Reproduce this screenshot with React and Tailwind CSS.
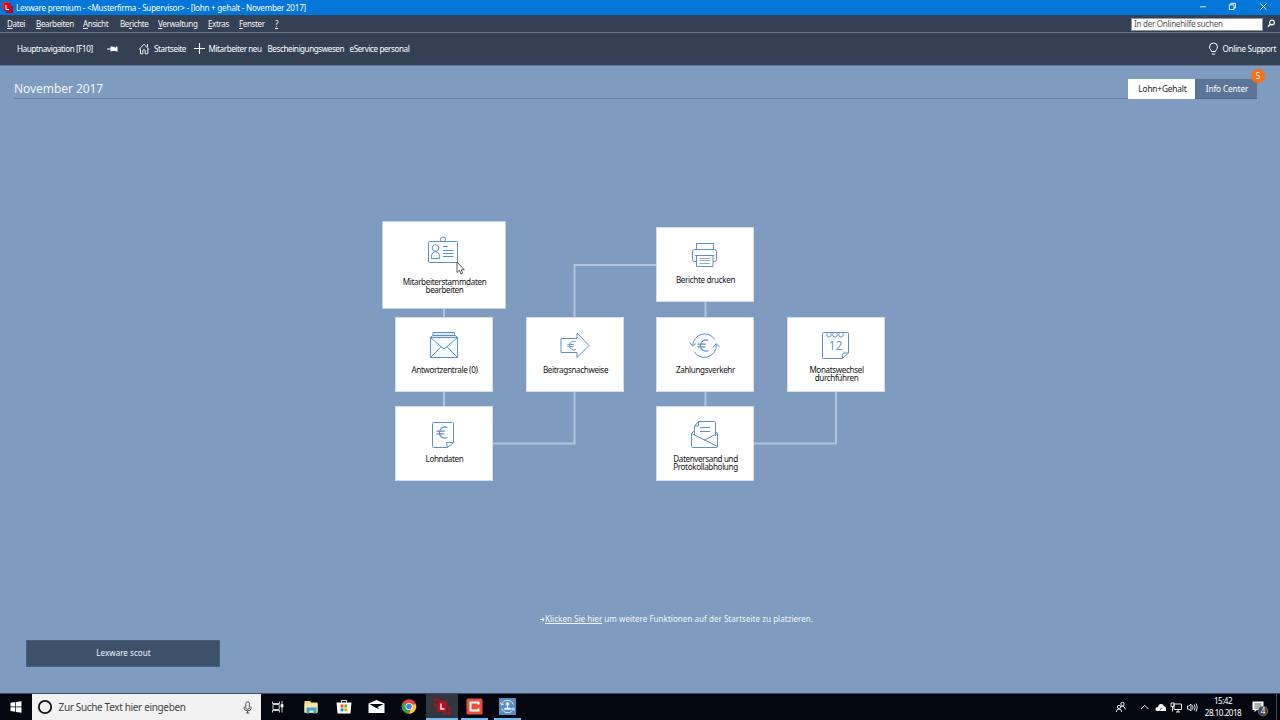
import React from "react";

const stroke = { fill: "none", stroke: "#5f8fc4", strokeWidth: 1, strokeLinejoin: "round" };

function Euro({ x, y, s = 1 }) {
  return (
    <g transform={`translate(${x} ${y}) scale(${s})`}>
      <path d="M4 -4.2A4.6 4.6 0 0 0 -2.6 0A4.6 4.6 0 0 0 4 4.2M-5 -1.2H2M-5 1.2H1.5" />
    </g>
  );
}

function Glyph({ children }) {
  return (
    <svg width="34" height="30" viewBox="0 0 34 30" className="shrink-0" {...stroke}>
      {children}
    </svg>
  );
}

const icons = {
  card: (
    <Glyph>
      <circle cx="16" cy="3.500" r="2.5" />
      <rect x="1.5" y="5.5" width="29" height="21" rx="1" fill="#fafdff" />
      <circle cx="8.500" cy="12" r="3.300" />
      <path d="M4.500 22.500V20.500C4.500 14.200 12.500 14.200 12.500 20.500V22.500ZM16 10.500H21M16 14.500H26.500M16 17.500H26.500M16 20.500H26.500" />
    </Glyph>
  ),
  mail: (
    <Glyph>
      <path d="M3.500 7.500L5.500 5.500H28.500L30.500 7.500M6 5V2.500H27.500V5" fill="#dcecf9" />
      <rect x="3.500" y="7.500" width="27" height="20" fill="#f4fafe" />
      <path d="M3.500 7.500L15 17.500Q17 19.500 19 17.500L30.500 7.500M3.500 27.500L14 16.700M30.500 27.500L20 16.700" />
    </Glyph>
  ),
  arrow: (
    <Glyph>
      <path d="M3 8.500H19V3L31 15.500L19 27.500V22.500H3Z" />
      <Euro x={14} y={15.500} s={0.95} />
    </Glyph>
  ),
  sheet: (
    <Glyph>
      <path d="M6.500 3.500H25.500Q26.500 3.500 26.500 4.500V23.500L20.500 28.500H6.500Q5.500 28.500 5.500 27.500V4.500Q5.500 3.500 6.500 3.500ZM26.500 23.500H19.500L20.500 28.500" />
      <Euro x={15.500} y={13.500} s={1.2} />
    </Glyph>
  ),
  printer: (
    <Glyph>
      <path d="M8.500 9.500V3.500H25.500V9.500M8.500 21.500H6.500Q4.500 21.500 4.500 19.500V11.500Q4.500 9.500 6.500 9.500H26.500Q28.500 9.500 28.500 11.500V19.500Q28.500 21.500 26.500 21.500H25M7 15.500H26.500M8.500 15.500V26.500H25V15.500" />
      <path d="M11.500 18.500H22M11.500 20.500H22M11.500 23.500H22" stroke="#8ba7cc" />
    </Glyph>
  ),
  cycle: (
    <Glyph>
      <path d="M26.800 9.500A12 12 0 0 0 4.700 15.500M1.800 12.500L4.700 16L8 13.500M6 21.500A12 12 0 0 0 28.300 14.500M25 17.500L28.300 13.500L31.500 17.200" />
      <Euro x={15.500} y={15.500} s={1.2} />
    </Glyph>
  ),
  calendar: (
    <Glyph>
      <path d="M7.500 2.500H4.500Q3.500 2.500 3.500 3.500V27.500Q3.500 28.500 4.500 28.500H23.500L29.500 23V3.500Q29.500 2.500 28.500 2.500H26M29.500 23H25Q23.500 23 23.500 24.500V28.500M7 2.500H27" />
      <path d="M8.300 3.200A2.300 2.300 0 1 0 11.700 3.200M14.300 3.200A2.300 2.300 0 1 0 17.700 3.200M20.300 3.200A2.300 2.300 0 1 0 23.700 3.200" />
      <text x="16.500" y="20" textAnchor="middle" fill="#6593c6" stroke="none" fontSize="12" fontFamily="Open Sans, sans-serif">12</text>
    </Glyph>
  ),
  letter: (
    <Glyph>
      <path d="M6.500 16V7L10.500 2.500H26.500Q27.500 2.500 27.500 3.500V17M6.500 7H10.500V2.500M12 8.500H22M12 12.500H22" />
      <path d="M6.500 11.500L3.500 14.500V27.500Q3.500 28.500 4.500 28.500H28.500Q29.500 28.500 29.500 27.500V14.500L27.500 12.500M3.500 14.500L29.500 27.500M29.500 14.500L16 21.200" />
    </Glyph>
  ),
};

const tiles = [
  { icon: "arrow", place: "left-[526px] top-[252px]", label: "Beitragsnachweise" },
  { icon: "mail", place: "left-[395px] top-[252px]", label: "Antwortzentrale (0)" },
  { icon: "sheet", place: "left-[395px] top-[341px]", label: "Lohndaten" },
  { icon: "printer", place: "left-[656px] top-[162px]", label: "Berichte drucken" },
  { icon: "cycle", place: "left-[656px] top-[252px]", label: "Zahlungsverkehr" },
  { icon: "calendar", place: "left-[787px] top-[252px]", label: "Monatswechsel\ndurchführen" },
  { icon: "letter", place: "left-[656px] top-[341px]", label: "Datenversand und\nProtokollabholung" },
];

function Label({ children }) {
  return (
    <div className="whitespace-pre pl-px text-center text-[8.1px] leading-[8px] tracking-[-0.36px] text-[#151515]">{children}</div>
  );
}

function TitleBar() {
  return (
    <div className="flex h-[15px] items-center bg-[#0276d9] text-white">
      <svg width="11" height="11" viewBox="0 0 11 11" className="ml-[2px]">
        <rect width="7" height="7" fill="#d5303a" />
        <rect x="4" y="4" width="7" height="7" fill="#a50e20" />
        <rect x="2" y="1" width="7" height="8" fill="#c8102a" />
        <path d="M4 3V7.500H7" stroke="#fff" fill="none" />
      </svg>
      <div className="mt-px ml-[3px] flex-1 whitespace-nowrap text-[8.1px] tracking-[-0.245px]">Lexware premium - &lt;Musterfirma - Supervisor&gt; - [lohn + gehalt - November 2017]</div>
      <svg width="80" height="15" viewBox="1200 0 80 15" fill="none" stroke="#fff" strokeWidth="0.9">
        <path d="M1199.500 6.800H1206M1229.300 4.800H1234V9.500H1229.300ZM1230.800 4.800V3.300H1235.500V8H1234M1260.300 3.500L1266.500 9.700M1266.500 3.500L1260.300 9.700" />
      </svg>
    </div>
  );
}

const menu = [
  ["", "D", "atei", "w-[29px]"],
  ["", "B", "earbeiten", "w-[47px]"],
  ["", "A", "nsicht", "w-[37px]"],
  ["Be", "r", "ichte", "w-[38px]"],
  ["", "V", "erwaltung", "w-[50px]"],
  ["", "E", "xtras", "w-[31px]"],
  ["", "F", "enster", "w-[36px]"],
  ["", "?", "", "w-[10px]"],
];

function MenuBar() {
  return (
    <div className="flex h-[18px] items-center border-b border-[#66758a] bg-[#344154] pl-[7px] text-[8.1px] tracking-[-0.4px] text-[#f3f5f8]">
      {menu.map(([a, u, b, w]) => (
        <div key={u} className={`${w} mt-px whitespace-nowrap`}>
          {a}<span className="underline underline-offset-1">{u}</span>{b}
        </div>
      ))}
      <div className="mt-px ml-auto flex h-[13px] w-[132px] items-center border border-[#8d96a3] bg-white pl-[2px] text-[8.1px] tracking-[-0.29px] text-[#555]">In der Onlinehilfe suchen</div>
      <svg width="17" height="12" viewBox="0 0 17 12" fill="none" stroke="#fff" strokeWidth="1.200">
        <circle cx="9" cy="4.500" r="2.300" /><path d="M7.500 6.300L4.800 8.800" />
      </svg>
    </div>
  );
}

function ToolBar() {
  return (
    <div className="flex h-[33px] items-center border-b border-[#607896] bg-[#344154] pl-[17px] text-[8.1px] tracking-[-0.42px] whitespace-nowrap text-white">
      <div className="mt-px w-[89px]">Hauptnavigation [F10]</div>
      <svg width="32" height="10" viewBox="0 0 32 10">
        <path d="M1 5H5M5 2.500V7.500" stroke="#fff" />
        <path d="M5 2.800H8L9 3.500H10V2.500H11.500V7.500H10V7H5Z" fill="#fff" />
      </svg>
      <svg width="15" height="12" viewBox="0 0 15 12" fill="none" stroke="#fff" strokeWidth="0.9">
        <path d="M1 6.500L6 1.200L11 6.500M2.500 5.500V10.800H4.800V7.500Q4.800 6.800 6 6.800T7.200 7.500V10.800H9.800V5.500M9.500 1V4" />
      </svg>
      <div className="mt-px w-[41px] pl-px">Startseite</div>
      <svg width="14" height="12" viewBox="0 0 14 12" stroke="#fff" strokeWidth="1.100"><path d="M0 5.500H11M5.500 0V11" /></svg>
      <div className="mt-px w-[59px] pl-[0.500px]">Mitarbeiter neu</div>
      <div className="mt-px w-[82px] pl-[0.500px]">Bescheinigungswesen</div>
      <div className="mt-px flex-1 pl-[0.500px]">eService personal</div>
      <svg width="15" height="14" viewBox="0 0 15 14" fill="none" stroke="#fff" strokeWidth="1">
        <path d="M4.500 9.500C4.500 8 2.500 7 2.500 5A4 4 0 0 1 10.500 5C10.500 7 8.500 8 8.500 9.500ZM4.800 12H8.200" />
      </svg>
      <div className="mt-px w-[58px] pl-[0.500px] tracking-[-0.3px]">Online Support</div>
    </div>
  );
}

function Heading() {
  return (
    <div className="flex h-[33px] items-end">
      <div className="ml-[14px] flex h-5 w-[1114px] items-center border-b border-[#6682a8] text-[12px] tracking-[-0.06px] text-[#f1f6fc]">
        <span>November 2017</span>
      </div>
      <div className="flex h-5 w-[67px] items-center justify-center bg-white pt-px pl-[2px] text-[8.3px] tracking-[-0.15px] text-[#222]">Lohn+Gehalt</div>
      <div className="relative flex h-5 w-[62px] items-center justify-center border-b border-[#4e668b] bg-[#5c7498] pt-px pl-[2px] text-[8.3px] tracking-[-0.15px] text-white">
        Info Center
        <div className="absolute -top-[10px] left-[56px] flex h-[14px] w-[14px] items-center justify-center rounded-full bg-[#f9701c] text-[8px]">5</div>
      </div>
    </div>
  );
}

function Workflow() {
  return (
    <div className="absolute left-0 -top-px">
      <svg width="1280" height="628" viewBox="0 65 1280 628" className="absolute left-0 top-0 max-w-none" fill="none" stroke="#b0c4de" strokeWidth="2">
        <path d="M444 300V420M493 443.500H574.500V265H656M705.500 300V410M754 443.500H836V390" />
      </svg>
      <div className="absolute left-[382px] top-[156px] flex h-[88px] w-[124px] flex-col items-center gap-[12px] border border-[#b9d4f0] bg-white pt-[14px]">
        {icons.card}
        <Label>{"Mitarbeiterstammdaten\nbearbeiten"}</Label>
      </div>
      {tiles.map((t) => (
        <div key={t.icon} className={`absolute ${t.place} flex h-[75px] w-[98px] flex-col items-center gap-[6px] border border-[#d3deec] bg-white pt-[12px]`}>
          {icons[t.icon]}
          <Label>{t.label}</Label>
        </div>
      ))}
      <svg width="9" height="14" viewBox="0 0 9 14" className="absolute left-[456px] top-[196px] max-w-none">
        <path d="M1 1V11.500L3.500 9.300L5 13L6.700 12.200L5.200 8.800H8.300Z" fill="#fff" stroke="#333" strokeWidth="0.8" />
      </svg>
    </div>
  );
}

function TaskBar() {
  return (
    <div className="flex h-[27px] items-center border-t border-[#3b4a60] bg-[#03060f] text-white">
      <div className="flex w-8 justify-center">
        <svg width="12" height="12" viewBox="0 0 12 12" fill="#fff"><path d="M0.500 1.800L5.300 1.100V5.600H0.500ZM6 1L11.500 0.200V5.600H6ZM0.500 6.300H5.300V10.800L0.500 10.100ZM6 6.300H11.500V11.700L6 10.900Z" /></svg>
      </div>
      <div className="flex h-full w-[229px] items-center bg-[#f2f2f2] text-[#444]">
        <svg width="26" height="16" viewBox="0 0 26 16"><circle cx="13" cy="8" r="6.200" fill="none" stroke="#111" strokeWidth="1.800" /></svg>
        <div className="mt-px flex-1 pl-[0.500px] text-[10px] tracking-[-0.34px]">Zur Suche Text hier eingeben</div>
        <svg width="18" height="13" viewBox="0 0 18 13" fill="none" stroke="#444" strokeWidth="0.9">
          <rect x="2.800" y="0.800" width="3.600" height="7.500" rx="1.800" /><path d="M1.200 5.500V7.500Q1.200 9.800 4.600 9.800T8 7.500V5.500M4.600 9.800V12M3 12H6.300" />
        </svg>
      </div>
      <svg width="165" height="26" viewBox="261 694 165 26">
        <g fill="none" stroke="#e8e8e8" strokeWidth="0.9">
          <path d="M272.500 701.500V703.500H279.500V701.500M272.500 712.500V710.500H279.500V712.500M273 704.500H279.200V709.500H273ZM282 701V712.500" />
          <path d="M281 704.500H283V707H281Z" fill="#fff" />
        </g>
        <path d="M304.500 701H310L311 702.500H317.500V713H304.500Z" fill="#f5d77e" />
        <path d="M304.500 703.500H317.500V712H304.500Z" fill="#fbe79e" />
        <path d="M306.500 707.500H316.500V713.500H313.500V710.500H309.500V713.500H306.500Z" fill="#39a5dc" />
        <path d="M341.500 703V700.500H346.500V703" fill="none" stroke="#eee" />
        <path d="M336.500 702.500H351.500L350.500 713.500H337.500Z" fill="#fff" />
        <path d="M340.500 704.500H343.500V707.500H340.500Z" fill="#e95026" /><path d="M344.300 704.500H347.300V707.500H344.300Z" fill="#7cb500" />
        <path d="M340.500 708.300H343.500V711.300H340.500Z" fill="#1797dc" /><path d="M344.300 708.300H347.300V711.300H344.300Z" fill="#f3aa00" />
        <path d="M368.500 703.500L376.500 700L384.500 703.500V713H368.500Z" fill="#fff" />
        <path d="M369.500 704L383.500 704L377.500 707.300L379.500 709L375.500 707.800Z" fill="#03060f" />
        <circle cx="409" cy="706.500" r="7.300" fill="#e8453c" />
        <path d="M409 706.500L402.700 703A7.300 7.300 0 0 0 409 713.800Z" fill="#2fa14f" />
        <path d="M409 713.800A7.300 7.300 0 0 0 416 704.400H409L411.500 708Z" fill="#f9cc35" />
        <circle cx="409" cy="706.500" r="3.500" fill="#fff" /><circle cx="409" cy="706.500" r="2.800" fill="#4285e8" />
      </svg>
      <div className="flex h-full w-8 items-center justify-center border-b-2 border-[#76b9ed] bg-[#34363f]">
        <svg width="18" height="17" viewBox="0 0 18 17" fill="none" stroke="#a51420" strokeWidth="1.500">
          <path d="M1.500 1.500H7V4M1.500 1.500V7.500H4M11 12V15.500H16.500V9.500H14" />
          <rect x="5" y="4" width="8" height="9" fill="#c00e1a" />
          <path d="M8 5.500V11H11.500" stroke="#fff" strokeWidth="1.300" />
        </svg>
      </div>
      <div className="flex h-full w-[33px] items-center justify-center">
        <div className="flex h-full w-[27px] items-center justify-center border-b-2 border-[#76b9ed]">
          <svg width="17" height="17" viewBox="0 0 17 17"><rect x="0.500" y="0.500" width="16" height="16" rx="1.500" fill="#e8503a" /><path d="M12.500 6.500V4.500H4.500V12.500H12.500V10.500" fill="none" stroke="#fff" strokeWidth="2" /></svg>
        </div>
      </div>
      <div className="flex h-full w-[33px] items-center justify-center">
        <div className="flex h-full w-[27px] items-center justify-center border-b-2 border-[#76b9ed]">
          <svg width="17" height="17" viewBox="0 0 17 17" fill="none" stroke="#dce9f7">
            <rect width="17" height="17" fill="#5c8cbd" stroke="none" />
            <path d="M2.500 6.500A6.200 6.200 0 0 1 14.200 6.500M14.500 10.500A6.200 6.200 0 0 1 2.800 10.500M1.500 4.500L2.500 7L5 6M15.500 12.500L14.500 10L12 11" />
            <circle cx="8.500" cy="6" r="1.400" fill="#fff" /><path d="M8.500 7V10M5 11.300Q6 10 8.500 9.800Q11 10 12 11.300Z" fill="#fff" />
          </svg>
        </div>
      </div>
      <svg width="88" height="26" viewBox="1113 693.500 88 26" className="ml-auto" fill="none" stroke="#fff" strokeWidth="0.9">
        <circle cx="1119" cy="706.500" r="1.700" /><path d="M1116.300 711.500Q1116.500 708.500 1119 708.500T1121.700 711.500" />
        <circle cx="1122.500" cy="703.500" r="1.700" /><path d="M1121 706Q1124.800 705 1125.300 709" />
        <path d="M1141 708.500L1144.700 704.800L1148.400 708.500" />
        <path d="M1157 710.500Q1155 710 1155.500 708T1158 706.500Q1158.500 703.500 1161 703.500T1164 705.800Q1166.500 706 1166 710.500Z" fill="#fff" stroke="none" />
        <path d="M1160 710Q1160 707.500 1162.500 707.500" stroke="#03060f" strokeWidth="0.6" />
        <path d="M1174 703.500H1181.500V709H1174ZM1176 711.500H1180M1178 709V711.500" /><path d="M1171 702.500H1174V706H1171ZM1172.500 706V711" />
        <path d="M1187.500 705.500H1189L1191 703.500V710.500L1189 708.500H1187.500ZM1192.500 705Q1193.500 707 1192.500 709M1194.300 704Q1195.800 707 1194.300 710M1196.200 703Q1198.300 707 1196.200 711" />
      </svg>
      <div className="w-[44px] pb-px text-center text-[8.1px] leading-[12px] tracking-[-0.5px]">
        <div>15:42</div>
        <div>28.10.2018</div>
      </div>
      <svg width="35" height="26" viewBox="1245 694 35 26">
        <path d="M1252.500 701.500H1263.500V710H1257L1254.500 712V710H1252.500Z" fill="#fff" />
        <path d="M1254.500 704H1261.500M1254.500 706H1261.500M1254.500 708H1260" stroke="#333" strokeWidth="0.8" />
        <circle cx="1263" cy="711" r="4.800" fill="#3d4047" stroke="#999" strokeWidth="0.6" />
        <text x="1263" y="714" fontSize="8.100" textAnchor="middle" fill="#fff">4</text>
        <path d="M1276.500 693V720" stroke="#444a55" />
      </svg>
    </div>
  );
}

export default function App() {
  return (
    <div className="flex h-[720px] w-[1280px] flex-col overflow-hidden bg-[#7f9bc0] font-['Noto_Sans',sans-serif] antialiased">
      <TitleBar />
      <MenuBar />
      <ToolBar />
      <main className="relative flex flex-1 flex-col">
        <Heading />
        <Workflow />
        <div className="mt-auto flex items-center pb-[15px] pl-[540px] text-[8.1px] leading-[12px] whitespace-nowrap text-[#f1f6fc]">
          <svg width="5" height="5" viewBox="0 0 5 5"><path d="M0 2.500H4M2.300 0.700L4.200 2.500L2.300 4.300" stroke="#fff" fill="none" /></svg>
          <div><span className="underline underline-offset-1">Klicken Sie hier</span> um weitere Funktionen auf der Startseite zu platzieren.</div>
        </div>
        <div className="mb-[26px] ml-[26px] flex h-[27px] w-[194px] items-center justify-center border border-[#4a5f7c] bg-[#3e516b] pl-px text-[8.1px] text-[#eef3f9]">Lexware scout</div>
      </main>
      <TaskBar />
    </div>
  );
}
